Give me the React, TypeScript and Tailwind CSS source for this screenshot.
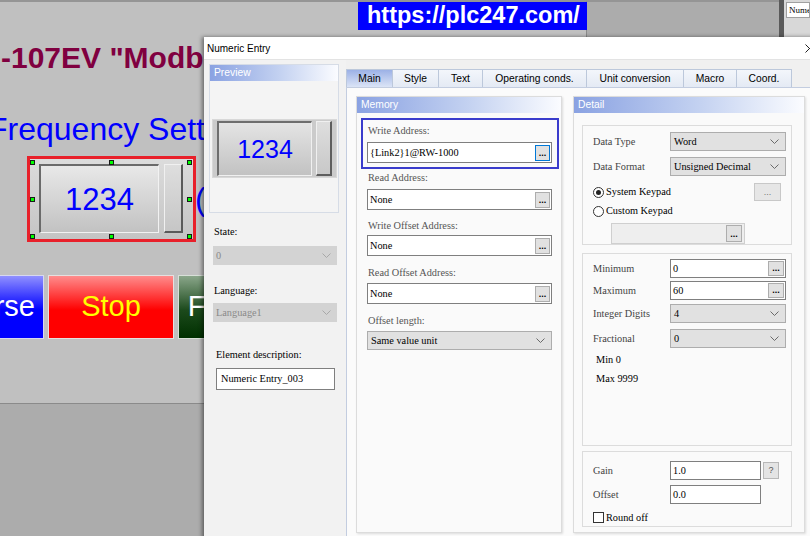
import React from 'react';

const SERIF = "font-['Liberation_Serif','Times_New_Roman',serif]";

function Chevron({ color = '#6a6a6a' }: { color?: string }) {
  return (
    <svg width="9" height="6" viewBox="0 0 9 6">
      <polyline points="0.5,0.5 4.5,4.5 8.5,0.5" fill="none" stroke={color} strokeWidth="1" />
    </svg>
  );
}

function Dots({ focus = false }: { focus?: boolean }) {
  return (
    <div
      className={`w-[15px] h-[16px] bg-[#e1e1e1] border ${focus ? 'border-[#0078d7]' : 'border-[#adadad]'} flex items-end justify-center pb-[2px] text-[9px] leading-none font-bold text-black`}
    >
      ...
    </div>
  );
}

function AddrField({ value, focus = false }: { value: string; focus?: boolean }) {
  return (
    <div className="w-[185px] h-[21px] border border-[#7f7f7f] bg-white flex items-center justify-between pl-[2px] pr-[1px]">
      <span className={`${SERIF} text-[10.3px] text-black`}>{value}</span>
      <Dots focus={focus} />
    </div>
  );
}

function Label({ children, className = '' }: { children: React.ReactNode; className?: string }) {
  return <div className={`${SERIF} text-[10.3px] leading-[14px] h-[14px] text-[#555555] ${className}`}>{children}</div>;
}

function Tab({ label, w, active = false }: { label: string; w: string; active?: boolean }) {
  return (
    <div
      className={`${w} h-[18px] border-t border-r border-[#bcc8db] flex items-center justify-center text-[10.3px] text-black ${
        active
          ? 'bg-[linear-gradient(180deg,#9cb1e6_0%,#dbe4f6_100%)]'
          : 'bg-[linear-gradient(180deg,#f3f6fb_0%,#e4eaf4_100%)]'
      }`}
    >
      {label}
    </div>
  );
}

function GroupHeader({ title }: { title: string }) {
  return (
    <div className="h-[16px] bg-[linear-gradient(90deg,#8aa2e2_0%,#c4d2f1_55%,#fbfcff_100%)] pl-[4px] flex items-center text-[10.3px] text-white">
      {title}
    </div>
  );
}

function DetailSelect({ value }: { value: string }) {
  return (
    <div className="w-[116px] h-[19px] border border-[#adadad] bg-[#e1e1e1] flex items-center justify-between pl-[3px] pr-[6px]">
      <span className={`${SERIF} text-[10.3px] text-black`}>{value}</span>
      <Chevron />
    </div>
  );
}

function DetailInput({ value, dots = false, w = 'w-[116px]' }: { value: string; dots?: boolean; w?: string }) {
  return (
    <div className={`${w} h-[19px] border border-[#7f7f7f] bg-white flex items-center justify-between pl-[2px] pr-[1px]`}>
      <span className={`${SERIF} text-[10.3px] text-black`}>{value}</span>
      {dots && (
        <div className="w-[16px] h-[15px] bg-[#e1e1e1] border border-[#adadad] flex items-end justify-center pb-[2px] text-[9px] leading-none font-bold">
          ...
        </div>
      )}
    </div>
  );
}

function DLabel({ children }: { children: React.ReactNode }) {
  return <div className={`${SERIF} w-[77px] text-[10.3px] text-[#444444]`}>{children}</div>;
}

function Radio({ checked }: { checked?: boolean }) {
  return (
    <div className="w-[11px] h-[11px] rounded-full border border-[#333333] bg-white flex items-center justify-center">
      {checked && <div className="w-[5px] h-[5px] rounded-full bg-[#222222]" />}
    </div>
  );
}

function Handle({ pos }: { pos: string }) {
  return <div className={`absolute w-[5px] h-[5px] bg-[#00ff00] border border-[#1a1a1a] ${pos}`} />;
}

function Canvas() {
  return (
    <div className="w-[587px] h-[404px] shrink-0 bg-[#c0c0c0] border-t-2 border-[#959595] border-b border-b-[#8a8a8a] border-r border-r-[#8a8a8a] flex flex-col overflow-hidden font-['Liberation_Sans',Arial,sans-serif]">
      <div className="mt-[41px] ml-[1px] whitespace-nowrap text-[30px] leading-none font-bold text-[#800040]">
        -107EV "Modbus RTU"
      </div>
      <div className="mt-[40px] ml-[-12px] whitespace-nowrap text-[32px] leading-none text-[#0000ff]">
        Frequency Setting
      </div>
      <div className="mt-[11px] ml-[27px] flex items-center">
        <div className="relative w-[169px] h-[86px]">
          <div className="w-full h-full border-[3px] border-[#e8202a] bg-[linear-gradient(180deg,#dcdcdc_0%,#c4c4c4_100%)] flex items-start pt-[5px] pl-[9px]">
            <div className="w-[120px] h-[69px] border-t-2 border-l-2 border-[#6a6a6a] border-b border-r border-b-[#f2f2f2] border-r-[#f2f2f2] bg-[linear-gradient(180deg,#e8e8e8_0%,#c2c2c2_100%)] flex items-center justify-center text-[31px] text-[#0000ff] leading-none">
              1234
            </div>
            <div className="ml-[5px] w-[19px] h-[69px] border-t border-l border-[#f0f0f0] border-b-2 border-r-2 border-b-[#5a5a5a] border-r-[#5a5a5a] bg-[linear-gradient(180deg,#dedede_0%,#c6c6c6_100%)]" />
          </div>
          <Handle pos="left-[3px] top-[4px]" />
          <Handle pos="left-[82px] top-[4px]" />
          <Handle pos="left-[160px] top-[4px]" />
          <Handle pos="left-[3px] top-[41px]" />
          <Handle pos="left-[160px] top-[41px]" />
          <Handle pos="left-[3px] top-[78px]" />
          <Handle pos="left-[82px] top-[78px]" />
          <Handle pos="left-[160px] top-[78px]" />
        </div>
        <div className="ml-[-1px] text-[32px] leading-none text-[#0000ff] whitespace-nowrap">(Hz)</div>
      </div>
      <div className="mt-[33px] ml-[-82px] flex gap-[4px]">
        <div className="w-[126px] h-[64px] shrink-0 border border-[#d8d8f0] bg-[linear-gradient(180deg,#9090ff_0%,#0000ff_55%,#0000ff_100%)] flex items-center justify-center text-[29px] text-white">
          Reverse
        </div>
        <div className="w-[126px] h-[64px] shrink-0 border border-[#e6e0e0] bg-[linear-gradient(180deg,#ff8c8c_0%,#ff0000_55%,#ff0000_100%)] flex items-center justify-center text-[29px] text-[#ffff00]">
          Stop
        </div>
        <div className="w-[126px] h-[64px] shrink-0 border border-[#d8e0d8] bg-[linear-gradient(180deg,#8aa68a_0%,#1c4a1c_55%,#003000_100%)] flex items-center justify-center text-[29px] text-white">
          Forward
        </div>
      </div>
    </div>
  );
}

function LeftPanel() {
  return (
    <div className="w-[142px] shrink-0 bg-[#f2f2f2] pl-[5px] pt-[4px] flex flex-col">
      <div className="w-[130px] h-[149px] border border-[#d6dce6] bg-[#f4f4f4] flex flex-col">
        <GroupHeader title="Preview" />
        <div className="mt-[38px] ml-[2px] w-[125px] h-[59px] bg-[#cbcbcb] border border-[#d8d8d8] flex items-start pt-[1px] pl-[4px]">
          <div className="w-[95px] h-[55px] border-t-2 border-l-2 border-[#6e6e6e] border-b border-r border-b-[#f0f0f0] border-r-[#f0f0f0] bg-[linear-gradient(180deg,#e4e4e4_0%,#c2c2c2_100%)] flex items-center justify-center text-[25px] leading-none text-[#0000ff]">
            1234
          </div>
          <div className="ml-[4px] w-[16px] h-[55px] border-t border-l border-[#f0f0f0] border-b-2 border-r-2 border-b-[#5e5e5e] border-r-[#5e5e5e] bg-[linear-gradient(180deg,#dedede_0%,#c8c8c8_100%)]" />
        </div>
      </div>
      <div className={`${SERIF} mt-[12px] ml-[5px] text-[10.3px] leading-[14px] text-black`}>State:</div>
      <div className="mt-[7px] ml-[4px] w-[124px] h-[19px] bg-[#d3d3d3] flex items-center justify-between pl-[3px] pr-[6px]">
        <span className={`${SERIF} text-[10.3px] text-[#8a8a8a]`}>0</span>
        <Chevron color="#a8a8a8" />
      </div>
      <div className={`${SERIF} mt-[19px] ml-[5px] text-[10.3px] leading-[14px] text-black`}>Language:</div>
      <div className="mt-[5px] ml-[4px] w-[124px] h-[19px] bg-[#d3d3d3] flex items-center justify-between pl-[3px] pr-[6px]">
        <span className={`${SERIF} text-[10.3px] text-[#8a8a8a]`}>Language1</span>
        <Chevron color="#a8a8a8" />
      </div>
      <div className={`${SERIF} mt-[26px] ml-[7px] text-[10.3px] leading-[14px] text-black`}>Element description:</div>
      <div className="mt-[6px] ml-[7px] w-[119px] h-[22px] border border-[#7f7f7f] bg-white flex items-center pl-[4px]">
        <span className={`${SERIF} text-[10.3px] text-black`}>Numeric Entry_003</span>
      </div>
    </div>
  );
}

function MemoryGroup() {
  return (
    <div className="w-[206px] h-[437px] shrink-0 border border-[#dcdcdc] bg-[#fafafa] shadow-[1px_1px_2px_rgba(0,0,0,0.12)] flex flex-col">
      <GroupHeader title="Memory" />
      <div className="mt-[5px] ml-[4px] w-[198px] h-[51px] border-2 border-[#3a3ccc] flex flex-col pl-[4px] pt-[4px]">
        <Label className="ml-[1px]">Write Address:</Label>
        <div className="mt-[4px]">
          <AddrField value="{Link2}1@RW-1000" focus />
        </div>
      </div>
      <div className="ml-[10px] flex flex-col">
        <Label className="mt-[2px] ml-[1px]">Read Address:</Label>
        <div className="mt-[4px]">
          <AddrField value="None" />
        </div>
        <Label className="mt-[9px] ml-[1px]">Write Offset Address:</Label>
        <div className="mt-[2px]">
          <AddrField value="None" />
        </div>
        <Label className="mt-[10px] ml-[1px]">Read Offset Address:</Label>
        <div className="mt-[3px]">
          <AddrField value="None" />
        </div>
        <Label className="mt-[10px] ml-[1px]">Offset length:</Label>
        <div className="mt-[3px] w-[185px] h-[19px] border border-[#adadad] bg-[#e1e1e1] flex items-center justify-between pl-[3px] pr-[6px]">
          <span className={`${SERIF} text-[10.3px] text-black`}>Same value unit</span>
          <Chevron />
        </div>
      </div>
    </div>
  );
}

function DetailGroup() {
  return (
    <div className="w-[232px] h-[437px] shrink-0 border border-[#dcdcdc] bg-[#fafafa] shadow-[1px_1px_2px_rgba(0,0,0,0.12)] flex flex-col">
      <GroupHeader title="Detail" />
      <div className="mt-[12px] ml-[8px] w-[210px] h-[120px] border border-[#dcdcdc] flex flex-col pl-[10px] pt-[6px]">
        <div className="flex items-center">
          <DLabel>Data Type</DLabel>
          <DetailSelect value="Word" />
        </div>
        <div className="mt-[6px] flex items-center">
          <DLabel>Data Format</DLabel>
          <DetailSelect value="Unsigned Decimal" />
        </div>
        <div className="mt-[7px] h-[18px] flex items-center">
          <Radio checked />
          <span className={`${SERIF} ml-[2px] text-[10.3px] text-black`}>System Keypad</span>
          <div className="ml-auto mr-[10px] w-[27px] h-[18px] border border-[#c8c8c8] bg-[#e6e6e6] flex items-end justify-center pb-[3px] text-[9px] leading-none text-[#777777]">
            ...
          </div>
        </div>
        <div className="mt-[3px] h-[14px] flex items-center">
          <Radio />
          <span className={`${SERIF} ml-[2px] text-[10.3px] text-black`}>Custom Keypad</span>
        </div>
        <div className="mt-[5px] ml-[18px] w-[134px] h-[21px] border border-[#cfcfcf] bg-[#eeeeee] flex items-center justify-end pr-[2px]">
          <div className="w-[16px] h-[17px] bg-[#e1e1e1] border border-[#adadad] flex items-end justify-center pb-[2px] text-[9px] leading-none font-bold">
            ...
          </div>
        </div>
      </div>
      <div className="mt-[8px] ml-[8px] w-[210px] h-[193px] border border-[#dcdcdc] flex flex-col pl-[10px] pt-[5px]">
        <div className="flex items-center">
          <DLabel>Minimum</DLabel>
          <DetailInput value="0" dots />
        </div>
        <div className="mt-[3px] flex items-center">
          <DLabel>Maximum</DLabel>
          <DetailInput value="60" dots />
        </div>
        <div className="mt-[4px] flex items-center">
          <DLabel>Integer Digits</DLabel>
          <DetailSelect value="4" />
        </div>
        <div className="mt-[6px] flex items-center">
          <DLabel>Fractional</DLabel>
          <DetailSelect value="0" />
        </div>
        <div className={`${SERIF} mt-[5px] ml-[3px] text-[10.3px] leading-[14px] text-black`}>Min 0</div>
        <div className={`${SERIF} mt-[5px] ml-[3px] text-[10.3px] leading-[14px] text-black`}>Max 9999</div>
      </div>
      <div className="mt-[5px] ml-[8px] w-[210px] h-[76px] border border-[#dcdcdc] flex flex-col pl-[10px] pt-[9px]">
        <div className="flex items-center">
          <DLabel>Gain</DLabel>
          <DetailInput value="1.0" w="w-[91px]" />
          <div className="ml-[2px] w-[16px] h-[17px] border border-[#b8b8b8] bg-[#e4e4e4] flex items-center justify-center text-[9px] text-[#555555]">
            ?
          </div>
        </div>
        <div className="mt-[5px] flex items-center">
          <DLabel>Offset</DLabel>
          <DetailInput value="0.0" w="w-[91px]" />
        </div>
        <div className="mt-[6px] flex items-center">
          <div className="w-[11px] h-[11px] border border-[#333333] bg-white" />
          <span className={`${SERIF} ml-[2px] text-[10.3px] text-black`}>Round off</span>
        </div>
      </div>
    </div>
  );
}

function Dialog() {
  return (
    <div className="absolute left-[204px] top-[37px] w-[612px] h-[510px] bg-[#f0f0f0] shadow-[-2px_0_4px_rgba(0,0,0,0.45)] flex flex-col font-['Liberation_Sans',Arial,sans-serif]">
      <div className="h-[23px] shrink-0 bg-white border-b border-[#e3e3e3] flex items-center pl-[3px] pr-[2px]">
        <span className="text-[10px] text-black">Numeric Entry</span>
        <svg className="ml-auto" width="9" height="9" viewBox="0 0 9 9">
          <path d="M0.5 0.5 L8.5 8.5 M8.5 0.5 L0.5 8.5" stroke="#222" strokeWidth="1" />
        </svg>
      </div>
      <div className="flex flex-1">
        <LeftPanel />
        <div className="flex-1 flex flex-col pt-[9px]">
          <div className="flex border-l border-[#bcc8db]">
            <Tab label="Main" w="w-[46px]" active />
            <Tab label="Style" w="w-[46px]" />
            <Tab label="Text" w="w-[44px]" />
            <Tab label="Operating conds." w="w-[104px]" />
            <Tab label="Unit conversion" w="w-[97px]" />
            <Tab label="Macro" w="w-[53px]" />
            <Tab label="Coord." w="w-[55px]" />
          </div>
          <div className="flex-1 border-l border-t border-[#c3cde0] bg-[#fbfbfb] pl-[9px] pt-[8px] flex gap-[11px]">
            <MemoryGroup />
            <DetailGroup />
          </div>
        </div>
      </div>
    </div>
  );
}

export default function App() {
  return (
    <div className="relative w-[810px] h-[536px] overflow-hidden bg-[#acacac] font-['Liberation_Sans',Arial,sans-serif]">
      <div className="flex h-[404px]">
        <Canvas />
        <div className="flex-1 bg-[#acacac] border-t-2 border-[#959595]" />
        <div className="w-[5px] h-full bg-[#5a5a5a]" />
        <div className="w-[26px] bg-[#d8d8d8] pt-[2px] pl-[2px]">
          <div className={`${SERIF} h-[16px] bg-white border border-[#a0a0a0] pl-[2px] text-[9px] leading-[14px] text-black overflow-hidden whitespace-nowrap`}>
            Numeric
          </div>
        </div>
      </div>
      <div className="absolute left-[358px] top-[2px] w-[229px] h-[28px] bg-[#0000ff] flex items-center pl-[9px] text-[23.5px] font-bold text-white leading-none">
        https://plc247.com/
      </div>
      <Dialog />
    </div>
  );
}
